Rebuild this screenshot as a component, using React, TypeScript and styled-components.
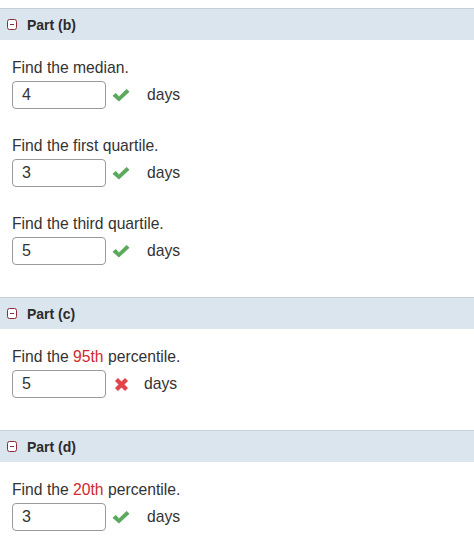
import styled, { createGlobalStyle } from "styled-components";

const GlobalStyle = createGlobalStyle`
  body {
    margin: 0;
    background: #ffffff;
    font-family: "Liberation Sans", Arial, sans-serif;
    color: #333333;
  }
`;

const Page = styled.div`
  padding-top: 8px;
  width: 474px;
`;

const PartHeader = styled.div`
  display: flex;
  align-items: center;
  gap: 10px;
  height: 31px;
  padding-left: 7px;
  background: #dbe5ee;
  border-top: 1px solid #c5d0da;
  font-size: 14px;
  font-weight: bold;
  color: #2b2b2b;
`;

const CollapseIcon = styled.span`
  box-sizing: border-box;
  width: 10px;
  height: 11px;
  border: 1.5px solid #8a2c3c;
  border-radius: 2.5px;
  background: #ffffff;
  display: flex;
  align-items: center;
  justify-content: center;

  &::after {
    content: "";
    width: 4px;
    height: 1.5px;
    background: #8a2c3c;
  }
`;

const PartBody = styled.div`
  display: flex;
  flex-direction: column;
  gap: 28px;
  padding: 19px 12px 32px;
`;

const Question = styled.div`
  display: flex;
  flex-direction: column;
  gap: 4px;
`;

const Prompt = styled.div`
  font-size: 15.7px;
  line-height: 18px;
  color: #333333;
`;

const Highlight = styled.span`
  color: #d0282e;
`;

const AnswerRow = styled.div`
  display: flex;
  align-items: center;
`;

const AnswerBox = styled.div`
  box-sizing: border-box;
  width: 94px;
  height: 28px;
  border: 1px solid #9a9a9a;
  border-radius: 4px;
  padding-left: 9px;
  display: flex;
  align-items: center;
  font-size: 16px;
  color: #333333;
`;

const Mark = styled.span`
  width: 20px;
  margin-left: 5px;
  display: flex;
  align-items: center;
  justify-content: center;
`;

const Unit = styled.span<{ $wrong?: boolean }>`
  margin-left: ${({ $wrong }) => ($wrong ? "13px" : "16px")};
  font-size: 15.7px;
  color: #333333;
`;

const CheckIcon = () => (
  <svg width="18" height="14" viewBox="0 0 22 17">
    <path
      d="M1 9.5 L4.8 6.5 L8.5 10.5 L17.8 1.5 L21 4.5 L8.5 16 Z"
      fill="#5aa95b"
      stroke="#4d9a4e"
      strokeWidth="0.6"
      strokeLinejoin="round"
    />
  </svg>
);

const CrossIcon = () => (
  <svg width="15" height="15" viewBox="0 0 17 17">
    <path
      d="M1.5 4.5 L4.5 1.5 L8.5 5.5 L12.5 1.5 L15.5 4.5 L11.5 8.5 L15.5 12.5 L12.5 15.5 L8.5 11.5 L4.5 15.5 L1.5 12.5 L5.5 8.5 Z"
      fill="#e2444a"
      stroke="#d33a40"
      strokeWidth="0.6"
      strokeLinejoin="round"
    />
  </svg>
);

type Item = {
  prompt: React.ReactNode;
  value: string;
  correct: boolean;
};

type Part = {
  label: string;
  items: Item[];
};

const parts: Part[] = [
  {
    label: "Part (b)",
    items: [
      { prompt: "Find the median.", value: "4", correct: true },
      { prompt: "Find the first quartile.", value: "3", correct: true },
      { prompt: "Find the third quartile.", value: "5", correct: true },
    ],
  },
  {
    label: "Part (c)",
    items: [
      {
        prompt: (
          <>
            Find the <Highlight>95th</Highlight> percentile.
          </>
        ),
        value: "5",
        correct: false,
      },
    ],
  },
  {
    label: "Part (d)",
    items: [
      {
        prompt: (
          <>
            Find the <Highlight>20th</Highlight> percentile.
          </>
        ),
        value: "3",
        correct: true,
      },
    ],
  },
];

export default function App() {
  return (
    <>
      <GlobalStyle />
      <Page>
        {parts.map((part) => (
          <section key={part.label}>
            <PartHeader>
              <CollapseIcon />
              {part.label}
            </PartHeader>
            <PartBody>
              {part.items.map((item, i) => (
                <Question key={i}>
                  <Prompt>{item.prompt}</Prompt>
                  <AnswerRow>
                    <AnswerBox>{item.value}</AnswerBox>
                    <Mark>{item.correct ? <CheckIcon /> : <CrossIcon />}</Mark>
                    <Unit $wrong={!item.correct}>days</Unit>
                  </AnswerRow>
                </Question>
              ))}
            </PartBody>
          </section>
        ))}
      </Page>
    </>
  );
}
